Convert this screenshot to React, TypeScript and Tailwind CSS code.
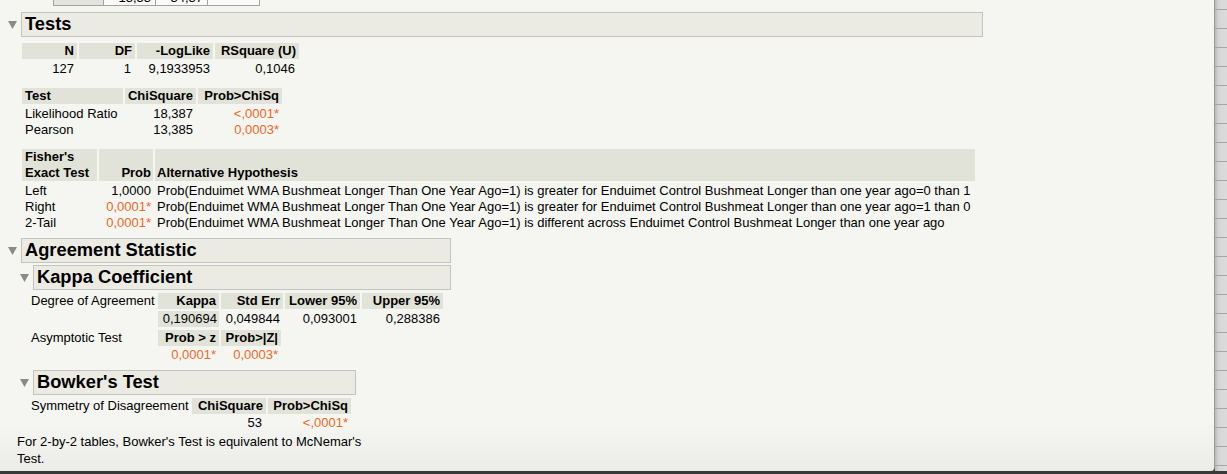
import type { ReactNode } from 'react'

// report colours
const HEAD = 'bg-[#e2e3d8] font-bold'
const ORANGE = 'text-[#f0661f]'

function Tri() {
  return (
    <svg width="9" height="8" viewBox="0 0 9 8" className="shrink-0">
      <path d="M0 0 L9 0 L4.5 8 Z" fill="#8a8a8a" />
    </svg>
  )
}

function Outline({ title, width, children }: { title: string; width: string; children?: ReactNode }) {
  return (
    <div>
      <div className="flex items-center">
        <div className="w-[13px] flex justify-start">
          <Tri />
        </div>
        <div className={`${width} h-[25px] border border-[#c4c4bf] bg-[#ebebe4] pl-[3px] flex items-center`}>
          <span className="text-[18.3px] font-bold leading-none">{title}</span>
        </div>
      </div>
      {children}
    </div>
  )
}

type Cell = { t: ReactNode; w: string; cls?: string }

function Row({ cells, h = 'h-[16px]', head }: { cells: Cell[]; h?: string; head?: boolean }) {
  return (
    <div className="flex gap-[2px]">
      {cells.map((c, i) => (
        <div
          key={i}
          className={`${c.w} ${h} ${head ? HEAD : ''} ${c.cls ?? 'text-right pr-[3px]'} leading-[16px] whitespace-nowrap`}
        >
          {c.t}
        </div>
      ))}
    </div>
  )
}

export default function App() {
  return (
    <div className="w-[1227px] h-[474px] overflow-hidden flex flex-col bg-[#3a3a3a] font-['Liberation_Sans',Arial,sans-serif] text-[13px] text-black">
      <div className="flex h-[471px]">
        {/* report window */}
        <div className="w-[1215px] h-full bg-[linear-gradient(to_bottom,#f5f6f1_90%,#ebebe7)] rounded-br-[4px] border-r border-[#9a9a9a] overflow-hidden">
          {/* tail of previous table */}
          <div className="h-[6px] overflow-hidden flex items-end pl-[53px]">
            <div className="flex h-[18px] border border-[#a3a3a0]">
              <div className="w-[50px] bg-[#e4e4de] border-r border-[#a3a3a0]" />
              <div className="w-[52px] bg-[#fafaf8] border-r border-[#a3a3a0] text-right pr-[4px] leading-[17px]">13,53</div>
              <div className="w-[52px] bg-[#fafaf8] border-r border-[#a3a3a0] text-right pr-[4px] leading-[17px]">34,37</div>
              <div className="w-[51px] bg-[#fafaf8]" />
            </div>
          </div>

          <div className="pl-[8px] pt-[6px]">
            <Outline title="Tests" width="w-[962px]">
              <div className="pl-[14px] pt-[6px]">
                <Row
                  head
                  cells={[
                    { t: 'N', w: 'w-[55px]' },
                    { t: 'DF', w: 'w-[56px]' },
                    { t: '-LogLike', w: 'w-[76px]' },
                    { t: 'RSquare (U)', w: 'w-[84px]' },
                  ]}
                />
                <div className="h-[2px]" />
                <Row
                  cells={[
                    { t: '127', w: 'w-[55px]' },
                    { t: '1', w: 'w-[56px]', cls: 'text-right pr-[4px]' },
                    { t: '9,1933953', w: 'w-[76px]' },
                    { t: '0,1046', w: 'w-[84px]', cls: 'text-right pr-[4px]' },
                  ]}
                />

                <div className="h-[11px]" />
                <Row
                  head
                  cells={[
                    { t: 'Test', w: 'w-[101px]', cls: 'pl-[3px]' },
                    { t: 'ChiSquare', w: 'w-[71px]' },
                    { t: 'Prob>ChiSq', w: 'w-[84px]' },
                  ]}
                />
                <div className="h-[2px]" />
                <Row
                  cells={[
                    { t: 'Likelihood Ratio', w: 'w-[101px]', cls: 'pl-[3px]' },
                    { t: '18,387', w: 'w-[71px]' },
                    { t: '<,0001*', w: 'w-[84px]', cls: `text-right pr-[3px] ${ORANGE}` },
                  ]}
                />
                <Row
                  cells={[
                    { t: 'Pearson', w: 'w-[101px]', cls: 'pl-[3px]' },
                    { t: '13,385', w: 'w-[71px]' },
                    { t: '0,0003*', w: 'w-[84px]', cls: `text-right pr-[3px] ${ORANGE}` },
                  ]}
                />

                <div className="h-[11px]" />
                <div className="flex gap-[2px] h-[32px] font-bold leading-[16px]">
                  <div className={`w-[75px] ${HEAD} pl-[3px]`}>
                    Fisher's
                    <br />
                    Exact Test
                  </div>
                  <div className={`w-[54px] ${HEAD} text-right pr-[2px] flex items-end justify-end`}>Prob</div>
                  <div className={`w-[820px] ${HEAD} pl-[2px] flex items-end`}>Alternative Hypothesis</div>
                </div>
                <div className="h-[2px]" />
                {[
                  ['Left', '1,0000', false, 'Prob(Enduimet WMA Bushmeat Longer Than One Year Ago=1) is greater for Enduimet Control Bushmeat Longer than one year ago=0 than 1'],
                  ['Right', '0,0001*', true, 'Prob(Enduimet WMA Bushmeat Longer Than One Year Ago=1) is greater for Enduimet Control Bushmeat Longer than one year ago=1 than 0'],
                  ['2-Tail', '0,0001*', true, 'Prob(Enduimet WMA Bushmeat Longer Than One Year Ago=1) is different across Enduimet Control Bushmeat Longer than one year ago'],
                ].map(([a, p, o, h]) => (
                  <Row
                    key={a as string}
                    cells={[
                      { t: a, w: 'w-[75px]', cls: 'pl-[3px]' },
                      { t: p, w: 'w-[54px]', cls: `text-right pr-[2px] ${o ? ORANGE : ''}` },
                      { t: h, w: 'w-[820px]', cls: 'pl-[2px]' },
                    ]}
                  />
                ))}
              </div>
            </Outline>

            <div className="h-[7px]" />
            <Outline title="Agreement Statistic" width="w-[430px]">
              <div className="pl-[12px] pt-[2px]">
                <Outline title="Kappa Coefficient" width="w-[418px]">
                  <div className="pt-[3px] pl-[11px]">
                    <div className="flex">
                      <div className="w-[127px] leading-[16px]">Degree of Agreement</div>
                      <div>
                        <Row
                          head
                          cells={[
                            { t: 'Kappa', w: 'w-[61px]' },
                            { t: 'Std Err', w: 'w-[62px]' },
                            { t: 'Lower 95%', w: 'w-[75px]' },
                            { t: 'Upper 95%', w: 'w-[81px]' },
                          ]}
                        />
                        <div className="h-[2px]" />
                        <Row
                          cells={[
                            { t: '0,190694', w: 'w-[61px]', cls: 'text-right pr-[2px] bg-[#e2e3d8]' },
                            { t: '0,049844', w: 'w-[62px]' },
                            { t: '0,093001', w: 'w-[75px]' },
                            { t: '0,288386', w: 'w-[81px]' },
                          ]}
                        />
                      </div>
                    </div>
                    <div className="h-[3px]" />
                    <div className="flex">
                      <div className="w-[127px] leading-[16px]">Asymptotic Test</div>
                      <div>
                        <Row
                          head
                          cells={[
                            { t: 'Prob > z', w: 'w-[61px]' },
                            { t: 'Prob>|Z|', w: 'w-[60px]' },
                          ]}
                        />
                        <div className="h-[1px]" />
                        <Row
                          cells={[
                            { t: '0,0001*', w: 'w-[61px]', cls: `text-right pr-[3px] ${ORANGE}` },
                            { t: '0,0003*', w: 'w-[60px]', cls: `text-right pr-[3px] ${ORANGE}` },
                          ]}
                        />
                      </div>
                    </div>
                  </div>
                </Outline>

                <div className="h-[7px]" />
                <Outline title="Bowker's Test" width="w-[323px]">
                  <div className="pt-[3px] pl-[11px]">
                    <div className="flex">
                      <div className="w-[161px] leading-[16px]">Symmetry of Disagreement</div>
                      <div>
                        <Row
                          head
                          cells={[
                            { t: 'ChiSquare', w: 'w-[74px]' },
                            { t: 'Prob>ChiSq', w: 'w-[83px]' },
                          ]}
                        />
                        <div className="h-[1px]" />
                        <Row
                          cells={[
                            { t: '53', w: 'w-[74px]', cls: 'text-right pr-[4px]' },
                            { t: '<,0001*', w: 'w-[83px]', cls: `text-right pr-[3px] ${ORANGE}` },
                          ]}
                        />
                      </div>
                    </div>
                  </div>
                </Outline>
              </div>
            </Outline>
            <div className="pl-[9px] pt-[2px] w-[369px] leading-[17px]">
              For 2-by-2 tables, Bowker's Test is equivalent to McNemar's Test.
            </div>
          </div>
        </div>

        {/* spreadsheet behind the window */}
        <div className="flex-1 bg-[linear-gradient(to_right,#b8b8b8,#d6d6d6_30%,#dcdcdc)] flex flex-col">
          <div className="h-[10px] border-b border-[#a6a6a6] shrink-0" />
          {Array.from({ length: 24 }).map((_, i) => (
            <div key={i} className="h-[19px] border-b border-[#a6a6a6] shrink-0" />
          ))}
        </div>
      </div>
    </div>
  )
}
